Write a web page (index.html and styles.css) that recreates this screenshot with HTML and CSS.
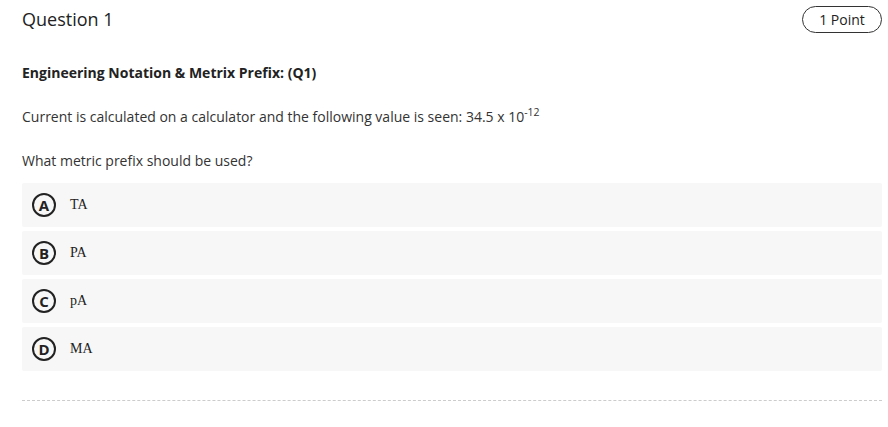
FILE: index.html
```html
<!DOCTYPE html>
<html>
<head>
<meta charset="utf-8">
<link rel="stylesheet" href="styles.css">
</head>
<body>
<div class="page">
  <div class="header">
    <h1 class="qtitle">Question 1</h1>
    <span class="points">1 Point</span>
  </div>
  <p class="subject">Engineering Notation &amp; Metrix Prefix: (Q1)</p>
  <p class="text">Current is calculated on a calculator and the following value is seen: 34.5 x 10<sup class="exp">-12</sup></p>
  <p class="text second">What metric prefix should be used?</p>
  <div class="options">
    <div class="option"><span class="letter">A</span><span class="label">TA</span></div>
    <div class="option"><span class="letter">B</span><span class="label">PA</span></div>
    <div class="option"><span class="letter">C</span><span class="label">pA</span></div>
    <div class="option"><span class="letter">D</span><span class="label">MA</span></div>
  </div>
  <div class="divider"></div>
</div>
</body>
</html>
```
FILE: styles.css
```css
html, body {
  margin: 0;
  padding: 0;
  background: #ffffff;
}
.page {
  padding: 6px 6px 0 22px;
  font-family: "Open Sans", "Noto Sans", sans-serif;
  color: #333333;
}
.header {
  display: flex;
  justify-content: space-between;
  align-items: center;
  height: 27px;
}
.qtitle {
  margin: 0;
  font-size: 18px;
  font-weight: 400;
  color: #222222;
  line-height: 27px;
}
.points {
  box-sizing: border-box;
  width: 80px;
  height: 27px;
  border: 1px solid #333333;
  border-radius: 14px;
  font-size: 14px;
  color: #222222;
  display: flex;
  align-items: center;
  justify-content: center;
}
.subject {
  margin: 30px 0 0 0;
  font-size: 14px;
  font-weight: 700;
  line-height: 20px;
  color: #222222;
}
.text {
  margin: 24px 0 0 0;
  font-size: 14px;
  line-height: 20px;
  color: #333333;
}
.exp {
  font-size: 10.5px;
  line-height: 0;
  vertical-align: 6px;
}
.options {
  margin-top: 12px;
  display: flex;
  flex-direction: column;
  gap: 4px;
}
.option {
  height: 44px;
  background: #f7f7f7;
  border-radius: 2px;
  display: flex;
  align-items: center;
  padding-left: 10px;
}
.letter {
  box-sizing: border-box;
  width: 24px;
  height: 24px;
  border: 2px solid #222222;
  border-radius: 50%;
  display: flex;
  align-items: center;
  justify-content: center;
  font-size: 15px;
  font-weight: 700;
  color: #222222;
  margin-right: 14px;
}
.label {
  font-family: "Liberation Serif", "Times New Roman", serif;
  font-size: 14px;
  color: #222222;
}
.divider {
  margin-top: 29px;
  border-top: 1px dashed #cccccc;
}
```
